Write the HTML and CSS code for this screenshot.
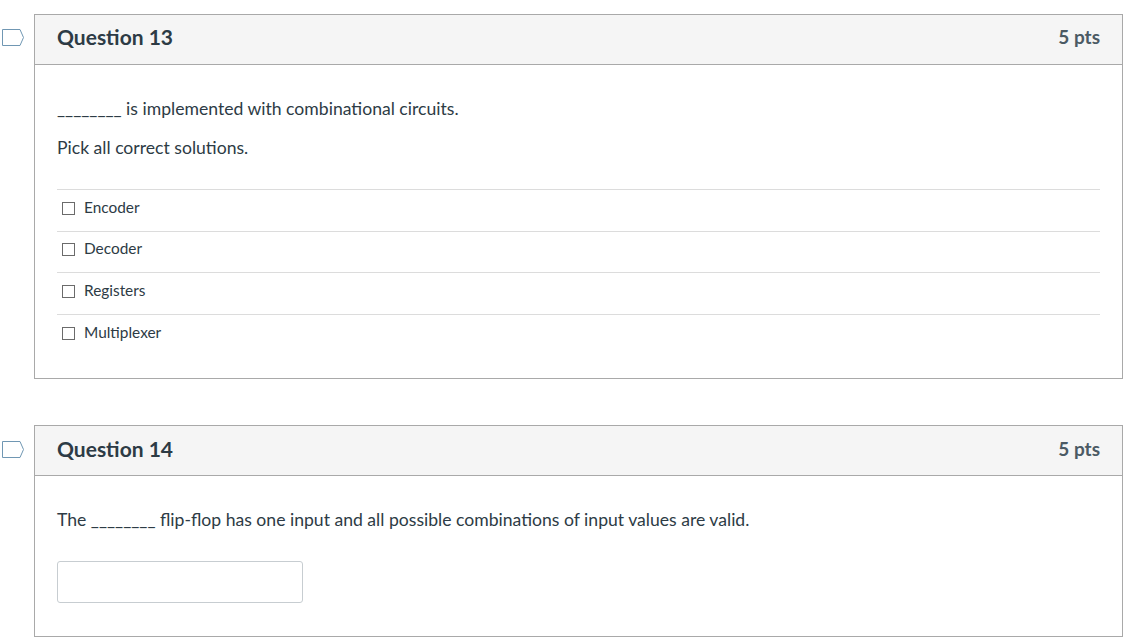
FILE: index.html
```html
<!DOCTYPE html>
<html lang="en">
<head>
    <meta charset="UTF-8">
    <title>Quiz Questions</title>
    <link rel="stylesheet" href="styles.css">
</head>
<body>
    <!-- Question 13 -->
    <div class="question question-first">
        <svg class="flag" width="25" height="19" viewBox="0 0 25 19"><path d="M2.5 1.5H20L23.5 9.5L20 17.5H2.5Z" fill="#fff" stroke="#7097b3" stroke-width="1"/></svg>
        <div class="question-header">
            <h2>Question 13</h2>
            <span class="pts">5 pts</span>
        </div>
        <div class="question-body">
            <p class="line-first">________ is implemented with combinational circuits.</p>
            <p class="line-second">Pick all correct solutions.</p>
            <div class="answers">
                <label class="answer"><span class="check"></span>Encoder</label>
                <label class="answer"><span class="check"></span>Decoder</label>
                <label class="answer"><span class="check"></span>Registers</label>
                <label class="answer"><span class="check"></span>Multiplexer</label>
            </div>
        </div>
    </div>

    <!-- Question 14 -->
    <div class="question question-last">
        <svg class="flag" width="25" height="19" viewBox="0 0 25 19"><path d="M2.5 1.5H20L23.5 9.5L20 17.5H2.5Z" fill="#fff" stroke="#7097b3" stroke-width="1"/></svg>
        <div class="question-header">
            <h2>Question 14</h2>
            <span class="pts">5 pts</span>
        </div>
        <div class="question-body body-short">
            <p class="line-first">The ________ flip-flop has one input and all possible combinations of input values are valid.</p>
            <div class="text-answer"></div>
        </div>
    </div>
</body>
</html>
```

FILE: styles.css
```css
body {
    margin: 0;
    padding: 14px 10px 0 34px;
    background-color: #fff;
    color: #2d3b45;
    font-family: 'Lato', 'Liberation Sans', sans-serif;
    font-size: 17.6px;
}

.question {
    position: relative;
    border: 1px solid #a9a9a9;
}

.question-first {
    margin-bottom: 46px;
}

/* The bookmark flag left of each question */
.flag {
    position: absolute;
    top: 13px;
    left: -35px;
}

.question-last .flag {
    top: 14px;
}

.question-header {
    display: flex;
    justify-content: space-between;
    align-items: center;
    height: 43px;
    padding: 0 22px 6px;
    background-color: #f5f5f5;
    border-bottom: 1px solid #a9a9a9;
}

.question-last .question-header {
    height: 45px;
    padding-bottom: 4px;
}

.question-header h2 {
    margin: 0;
    font-size: 21px;
    font-weight: 700;
}

.pts {
    font-size: 19px;
    font-weight: 700;
    color: #4b5a64;
}

.question-body {
    padding: 33px 22px 22.32px;
}

.body-short {
    padding-bottom: 33px;
}

.question-body p {
    margin: 0;
    line-height: 21px;
}

.line-second {
    padding-top: 18px;
}

.answers {
    margin-top: 31px;
}

.answer {
    display: flex;
    align-items: center;
    height: 33.67px;
    padding-bottom: 7px;
    border-top: 1px solid #dcdcdc;
    font-size: 15.4px;
}

.check {
    width: 11px;
    height: 11px;
    margin: 3px 9px 0 5px;
    border: 1px solid #6b6b6b;
}

.text-answer {
    width: 244px;
    height: 40px;
    margin-top: 31px;
    border: 1px solid #c7cdd1;
    border-radius: 3px;
}
```
